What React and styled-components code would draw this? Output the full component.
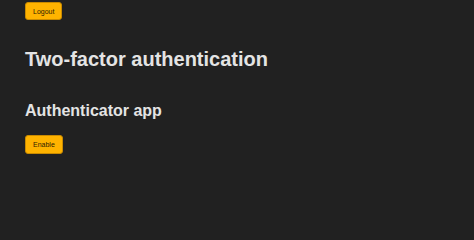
import styled, { createGlobalStyle } from "styled-components"

const GlobalStyle = createGlobalStyle`
html, body {
    margin: 0;
    padding: 0;
    background: #212121;
}
body {
    font-family: "Liberation Sans", Arial, sans-serif;
    color: #e4e4e4;
}
`

const Page = styled.div`
    min-height: 220px;
    padding: 2px 25px 0;
    box-sizing: border-box;
`

const Button = styled.button`
    display: block;
    height: ${(p) => p.$h || 18}px;
    padding: 0 7px;
    background: #ffb300;
    border: 1px solid #c98a00;
    border-radius: 3px;
    color: #2e2200;
    font-family: "Liberation Sans", Arial, sans-serif;
    font-size: 7px;
    cursor: pointer;
`

const Title = styled.h1`
    margin: 27px 0 0;
    font-size: 20px;
    line-height: 24px;
    font-weight: bold;
`

const Subtitle = styled.h2`
    margin: 30px 0 0;
    font-size: 16px;
    line-height: 20px;
    font-weight: bold;
`

const Section = styled.div`
    margin-top: 14px;
`

export default function App() {
    return (
        <>
            <GlobalStyle />
            <Page>
                <Button>Logout</Button>
                <Title>Two-factor authentication</Title>
                <Subtitle>Authenticator app</Subtitle>
                <Section>
                    <Button $h={19}>Enable</Button>
                </Section>
            </Page>
        </>
    )
}
